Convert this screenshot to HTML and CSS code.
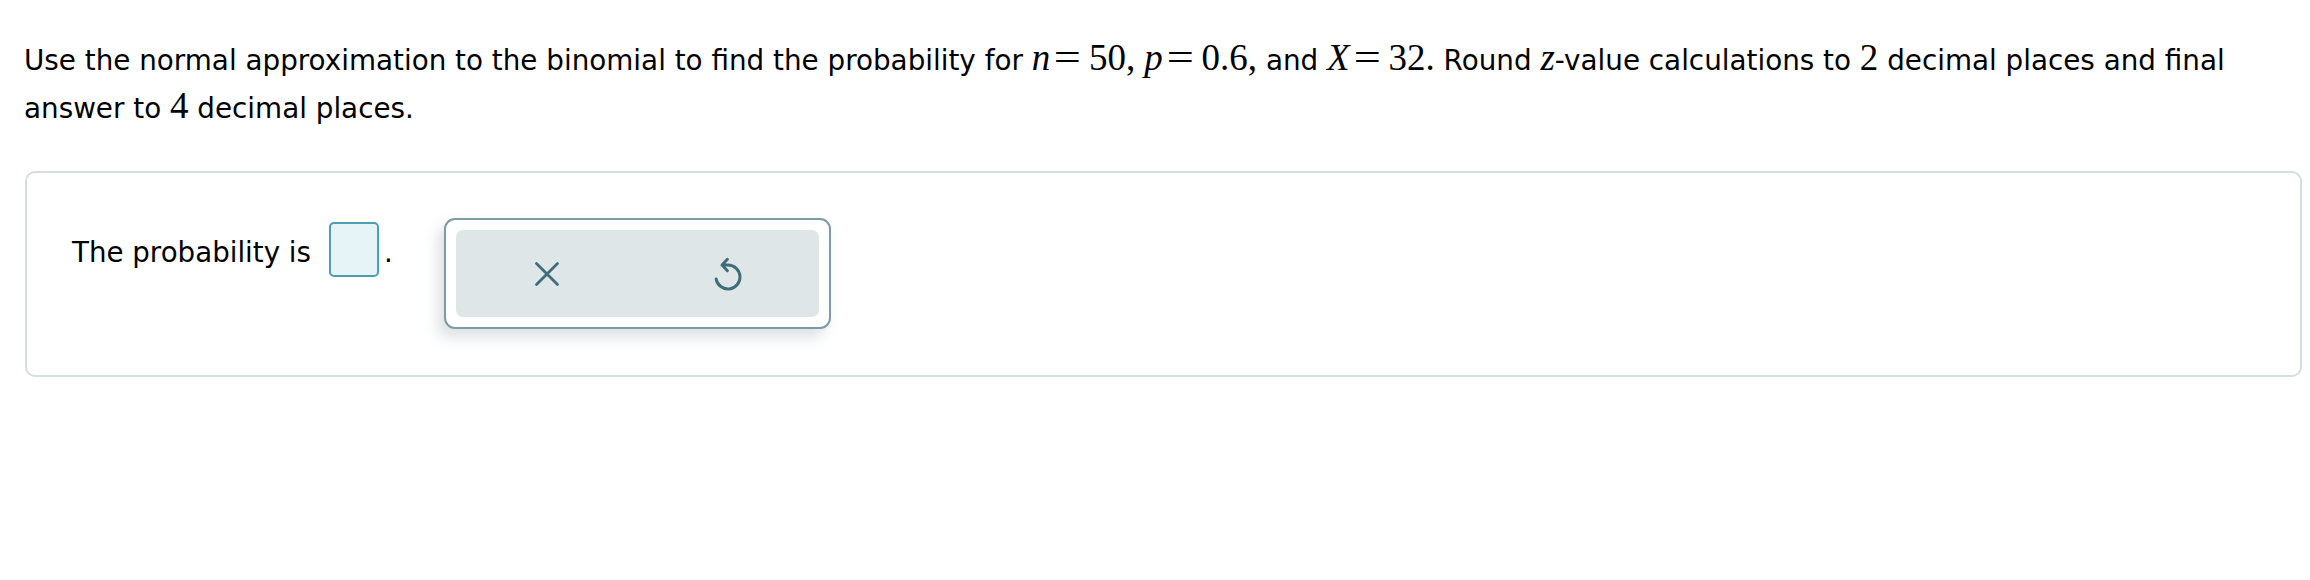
FILE: index.html
```html
<!DOCTYPE html>
<html>
<head>
<meta charset="utf-8">
<link rel="stylesheet" href="styles.css">
</head>
<body>
<div class="page">
  <p class="question">Use the normal approximation to the binomial to find the probability for <span class="m"><i>n</i><span class="op">=</span>50,</span> <span class="m"><i>p</i><span class="op">=</span>0.6,</span> and <span class="m"><i>X</i><span class="op">=</span>32.</span> Round <span class="m"><i>z</i></span>-value calculations to <span class="m">2</span> decimal places and final answer to <span class="m">4</span> decimal places.</p>
  <div class="card">
    <div class="answer">
      <span class="label">The probability is</span>
      <span class="box"></span>
      <span class="dot">.</span>
    </div>
    <div class="toolbar">
      <div class="tools">
        <button class="tool" aria-label="Clear">
          <svg width="26" height="26" viewBox="0 0 26 26"><path d="M2.5 2.5 L23.5 23.5 M23.5 2.5 L2.5 23.5" stroke="#3f6d7b" stroke-width="2.8" stroke-linecap="round" fill="none"/></svg>
        </button>
        <button class="tool" aria-label="Undo">
          <svg width="36" height="36" viewBox="0 0 24 24"><path d="M12 6 A8 8 0 1 1 4.1 15.3 M12 6 L8 6 M11.6 2.2 L8 6 L11.6 9.8" stroke="#3f6d7b" stroke-width="2" stroke-linecap="round" stroke-linejoin="round" fill="none"/></svg>
        </button>
      </div>
    </div>
  </div>
</div>
</body>
</html>
```

FILE: styles.css
```css
html, body {
  margin: 0;
  padding: 0;
  background: #ffffff;
}
body {
  font-family: "DejaVu Sans", Verdana, sans-serif;
  color: #000;
}
.page {
  padding: 37px 8px 0 24px;
}
.question {
  margin: 0;
  max-width: 2255px;
  font-size: 27.8px;
  line-height: 48px;
}
.m {
  font-family: "Liberation Serif", "Times New Roman", serif;
  font-size: 37px;
  line-height: 1;
}
.m i {
  font-style: italic;
}
.op {
  display: inline-block;
  margin: 0 11px 0 7px;
  transform: scaleX(1.3);
}
.card {
  margin: 38px 0 0 1px;
  height: 202px;
  border: 2px solid #d3dfe1;
  border-radius: 10px;
  display: flex;
  align-items: flex-start;
  padding: 0 0 0 45px;
}
.answer {
  display: flex;
  align-items: flex-start;
  margin-top: 49px;
  font-size: 27.7px;
}
.label {
  margin-top: 14px;
  white-space: nowrap;
}
.box {
  width: 46px;
  height: 51px;
  border: 2px solid #4c9fb3;
  border-radius: 5px;
  background: #e6f4f8;
  margin-left: 18px;
}
.dot {
  margin: 14px 0 0 5px;
}
.toolbar {
  margin: 45px 0 0 51px;
  width: 363px;
  height: 87px;
  padding: 10px;
  border: 2px solid #7c9ba4;
  border-radius: 11px;
  background: #fff;
  box-shadow: -6px 8px 14px rgba(60, 90, 100, 0.18);
}
.tools {
  display: flex;
  height: 100%;
  background: #dfe6e8;
  border-radius: 7px;
}
.tool {
  flex: 1;
  border: 0;
  background: transparent;
  padding: 0;
  display: flex;
  align-items: center;
  justify-content: center;
}
```
